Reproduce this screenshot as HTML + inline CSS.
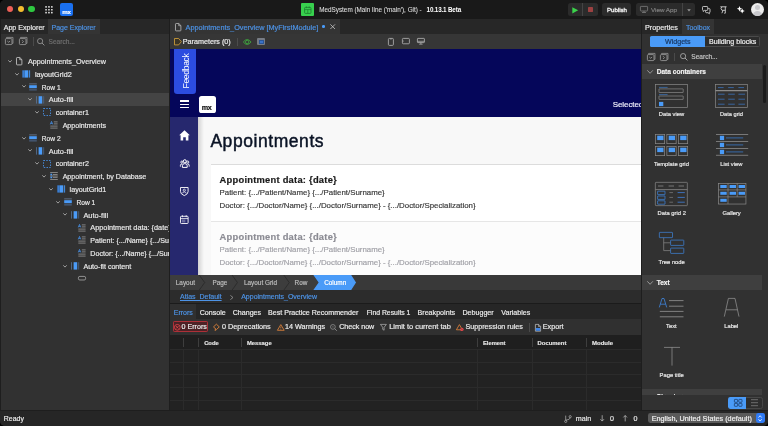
<!DOCTYPE html>
<html lang="en"><head><meta charset="utf-8"><title>MedSystem - Studio Pro</title>
<style>
html,body{margin:0;padding:0}
body{width:768px;height:426px;overflow:hidden;position:relative;background:#000;font-family:"Liberation Sans",sans-serif;font-size:7.1px;color:#e4e4e4}
div,span,svg{position:absolute;box-sizing:border-box}
#root{left:0;top:0;width:768px;height:426px;will-change:transform;overflow:hidden;border-radius:5px;background:#1e1e1e}
span{white-space:nowrap;line-height:10px;height:10px;-webkit-text-stroke:0.18px}
.b{font-weight:bold}
svg{overflow:visible}
#lp,#cp,#rp,#bp,#cv{overflow:hidden}
</style></head><body><div id="root">

<div id="tb" style="left:0;top:0;width:768px;height:19.2px;background:#191919">
<div style="left:6.8px;top:5.8999999999999995px;width:6.6px;height:6.6px;border-radius:50%;background:#ee5f57"></div>
<div style="left:17.5px;top:5.8999999999999995px;width:6.6px;height:6.6px;border-radius:50%;background:#f5bd2f"></div>
<div style="left:28.099999999999998px;top:5.8999999999999995px;width:6.6px;height:6.6px;border-radius:50%;background:#2ec840"></div>
<svg style="left:0px;top:0px;" width="60" height="19" viewBox="0 0 60 19"><rect x="45.2" y="6.0" width="1.7" height="1.7" rx="0.4" fill="#d8d8d8"/><rect x="45.2" y="8.9" width="1.7" height="1.7" rx="0.4" fill="#d8d8d8"/><rect x="45.2" y="11.8" width="1.7" height="1.7" rx="0.4" fill="#d8d8d8"/><rect x="48.1" y="6.0" width="1.7" height="1.7" rx="0.4" fill="#d8d8d8"/><rect x="48.1" y="8.9" width="1.7" height="1.7" rx="0.4" fill="#d8d8d8"/><rect x="48.1" y="11.8" width="1.7" height="1.7" rx="0.4" fill="#d8d8d8"/><rect x="51.0" y="6.0" width="1.7" height="1.7" rx="0.4" fill="#d8d8d8"/><rect x="51.0" y="8.9" width="1.7" height="1.7" rx="0.4" fill="#d8d8d8"/><rect x="51.0" y="11.8" width="1.7" height="1.7" rx="0.4" fill="#d8d8d8"/></svg>
<div style="left:60px;top:3px;width:12.6px;height:13.2px;background:#1a70f0;border-radius:2px"></div>
<span style="left:62.3px;top:7.40px;font-size:6.2px;color:#fff;font-weight:bold;letter-spacing:-0.3px">mx</span>
<div style="left:300.7px;top:3px;width:13.3px;height:13.2px;background:#38d04e;border-radius:1px"></div>
<svg style="left:303.6px;top:5.6px;" width="8" height="8" viewBox="0 0 8 8"><rect x="0.6" y="1.4" width="6.4" height="6" rx="0.8" fill="none" stroke="#1d7a2e" stroke-width="0.8"/><path d="M0.6 3.6H7M2.4 0.4V2.2M5.2 0.4V2.2M3.8 3.6V7.4" stroke="#1d7a2e" stroke-width="0.7" fill="none"/></svg>
<span style="left:319.2px;top:5.20px;font-size:6.35px;color:#dedede;-webkit-text-stroke:0.08px">MedSystem (Main line ('main'), Git) -</span>
<span style="left:426.6px;top:5.20px;font-size:6.3px;color:#fff;font-weight:bold;letter-spacing:-0.17px;-webkit-text-stroke:0">10.13.1 Beta</span>
<div style="left:567.5px;top:3.3px;width:30.3px;height:12.5px;background:#2b2b2b;border-radius:2.5px"></div>
<div style="left:582.2px;top:3.3px;width:0.6px;height:12.5px;background:#444;"></div>
<svg style="left:572px;top:6.5px;" width="6.4" height="6.6" viewBox="0 0 6.4 6.6"><path d="M0.3 0.2L6.2 3.3L0.3 6.4Z" fill="#3bd34b"/></svg>
<div style="left:587.8px;top:7px;width:5.3px;height:5.2px;background:#9c4141;border-radius:0.4px"></div>
<div style="left:602.3px;top:3.3px;width:29.2px;height:12.5px;background:#2b2b2b;border-radius:2.5px"></div>
<span style="left:607px;top:5.40px;font-size:6.1px;color:#f4f4f4;-webkit-text-stroke:0.3px">Publish</span>
<div style="left:635.6px;top:3.3px;width:59.4px;height:12.5px;background:#2b2b2b;border-radius:2.5px"></div>
<div style="left:682.3px;top:3.3px;width:0.6px;height:12.5px;background:#444;"></div>
<svg style="left:639.8px;top:6.3px;" width="8" height="7" viewBox="0 0 8 7"><rect x="0.4" y="0.4" width="7.2" height="4.6" rx="0.7" fill="none" stroke="#7d7d7d" stroke-width="0.8"/><path d="M4 5V6.4M2 6.5H6" stroke="#7d7d7d" stroke-width="0.8"/></svg>
<span style="left:651px;top:5.40px;font-size:6.25px;color:#808080;">View App</span>
<svg style="left:687px;top:8.6px;" width="4" height="3" viewBox="0 0 4 3"><path d="M0.2 0.2H3.8L2 2.4Z" fill="#9a9a9a"/></svg>
<svg style="left:702px;top:5.5px;" width="9" height="9" viewBox="0 0 9 9"><path d="M0.5 1.3Q0.5 0.5 1.3 0.5H4.9Q5.7 0.5 5.7 1.3V3.6Q5.7 4.4 4.9 4.4H2.4L1.2 5.5V4.4Q0.5 4.3 0.5 3.6Z" fill="none" stroke="#e6e6e6" stroke-width="0.8"/><path d="M6.2 2.6H7.2Q8 2.6 8 3.4V5.9Q8 6.7 7.3 6.7V7.8L6.1 6.7H4.2Q3.5 6.7 3.4 5.2" fill="none" stroke="#e6e6e6" stroke-width="0.8"/></svg>
<svg style="left:719.8px;top:6px;" width="7" height="7.4" viewBox="0 0 7 7.4"><path d="M0.3 0.8H6.6M5.3 0.8V7.2M5.3 4.3H1.9L1 2.6L1.9 0.9M1.9 7.2L3 4.5M5.3 7.2H4.2" fill="none" stroke="#e6e6e6" stroke-width="0.8"/></svg>
<svg style="left:736.6px;top:5.9px;" width="8" height="8" viewBox="0 0 8 8"><path d="M2.5 0L3.3 1.9L5.2 2.7L3.3 3.5L2.5 5.4L1.7 3.5L-0.2 2.7L1.7 1.9Z" fill="#fff"/><path d="M5.2 2.4L6 4.2L7.8 5L6 5.8L5.2 7.6L4.4 5.8L2.6 5L4.4 4.2Z" fill="#fff"/></svg>
<div style="left:751px;top:2.9px;width:13.2px;height:13.2px;border-radius:50%;background:#ececec;overflow:hidden"><div style="left:4.3px;top:2.6px;width:4.6px;height:4.6px;border-radius:50%;background:#c9c9cd"></div><div style="left:1.8px;top:8px;width:9.6px;height:9px;border-radius:50%;background:#c9c9cd"></div></div>
</div>
<div id="lp" style="left:0;top:19.2px;width:169.3px;height:391.3px;background:#313131">
<div style="left:0px;top:0px;width:169.3px;height:14.4px;background:#272727;"></div>
<div style="left:48px;top:0px;width:51.5px;height:14.4px;background:#343434;"></div>
<span style="left:3.7px;top:3.50px;font-size:7.1px;color:#ededed;">App Explorer</span>
<span style="left:51.6px;top:3.50px;font-size:6.96px;color:#4d93e6;">Page Explorer</span>
<svg style="left:4.6px;top:18.2px;" width="8.4" height="8.4" viewBox="0 0 8.4 8.4"><rect x="0.4" y="1.6" width="6.6" height="6" rx="1" fill="none" stroke="#a2a2a2" stroke-width="0.8"/><path d="M1.6 1.4V0.4H8V6.4H7.2" fill="none" stroke="#a2a2a2" stroke-width="0.7"/><path d="M2.3 4L3.7 5.3L5.1 4" fill="none" stroke="#a2a2a2" stroke-width="0.8"/></svg>
<svg style="left:19px;top:18.2px;" width="8.4" height="8.4" viewBox="0 0 8.4 8.4"><rect x="0.4" y="1.6" width="6.6" height="6" rx="1" fill="none" stroke="#a2a2a2" stroke-width="0.8"/><path d="M1.6 1.4V0.4H8V6.4H7.2" fill="none" stroke="#a2a2a2" stroke-width="0.7"/><path d="M3.1 3.2L4.4 4.6L3.1 6" fill="none" stroke="#a2a2a2" stroke-width="0.8"/></svg>
<div style="left:33px;top:18.3px;width:0.6px;height:8.3px;background:#4a4a4a;"></div>
<svg style="left:37px;top:18.4px;" width="8" height="8" viewBox="0 0 8 8"><circle cx="3.1" cy="3.1" r="2.6" fill="none" stroke="#9a9a9a" stroke-width="0.8"/><path d="M5 5L7.4 7.4" stroke="#9a9a9a" stroke-width="0.9"/></svg>
<span style="left:48.6px;top:18.00px;font-size:6.55px;color:#6f6f6f;">Search...</span>
<svg style="left:7.699999999999999px;top:40.7px;" width="4" height="2.6" viewBox="0 0 4 2.6"><path d="M0.3 0.3L2 2.1L3.7 0.3" fill="none" stroke="#b4b4b4" stroke-width="0.85"/></svg>
<svg style="left:16.0px;top:37.8px;" width="6.4" height="8.4" viewBox="0 0 6.4 8.4"><path d="M0.5 1.2Q0.5 0.5 1.2 0.5H3.8L5.9 2.6V7.2Q5.9 7.9 5.2 7.9H1.2Q0.5 7.9 0.5 7.2Z" fill="none" stroke="#cfcfcf" stroke-width="0.8"/><path d="M3.7 0.6V2.7H5.8" fill="none" stroke="#cfcfcf" stroke-width="0.7"/></svg>
<span style="left:28.0px;top:37.90px;font-size:7.2px;color:#e9e9e9;">Appointments_Overview</span>
<svg style="left:14.629999999999999px;top:53.5px;" width="4" height="2.6" viewBox="0 0 4 2.6"><path d="M0.3 0.3L2 2.1L3.7 0.3" fill="none" stroke="#b4b4b4" stroke-width="0.85"/></svg>
<svg style="left:21.93px;top:50.8px;" width="8.4" height="8" viewBox="0 0 8.4 8"><rect x="0.3" y="0.3" width="2.4" height="7.3" fill="#3a7ccf"/><rect x="2.7" y="0.3" width="3.6" height="7.3" fill="#4a9bf8"/><rect x="7.2" y="0.3" width="0.9" height="7.3" fill="#4a9bf8"/></svg>
<span style="left:34.93px;top:50.70px;font-size:7.2px;color:#e9e9e9;">layoutGrid2</span>
<svg style="left:21.56px;top:66.3px;" width="4" height="2.6" viewBox="0 0 4 2.6"><path d="M0.3 0.3L2 2.1L3.7 0.3" fill="none" stroke="#b4b4b4" stroke-width="0.85"/></svg>
<svg style="left:29.46px;top:63.599999999999994px;" width="8" height="8" viewBox="0 0 8 8"><rect x="0.2" y="0.5" width="7.6" height="0.8" fill="#6c7f99"/><rect x="0.2" y="2.2" width="7.6" height="3" fill="#4a9bf8"/><rect x="0.2" y="6.5" width="7.6" height="0.8" fill="#5577a8"/></svg>
<span style="left:41.86px;top:63.50px;font-size:6.6px;color:#e9e9e9;">Row 1</span>
<div style="left:0px;top:74.0px;width:169.3px;height:12.8px;background:#444444;"></div>
<svg style="left:28.49px;top:79.1px;" width="4" height="2.6" viewBox="0 0 4 2.6"><path d="M0.3 0.3L2 2.1L3.7 0.3" fill="none" stroke="#b4b4b4" stroke-width="0.85"/></svg>
<svg style="left:36.39px;top:76.4px;" width="8" height="8" viewBox="0 0 8 8"><rect x="0.3" y="0.2" width="0.7" height="7.4" fill="#5f7fa8"/><rect x="2.6" y="0.2" width="3.6" height="7.4" fill="#4a9bf8"/><rect x="7.4" y="0.2" width="0.7" height="7.4" fill="#4f6c92"/></svg>
<span style="left:48.79px;top:76.30px;font-size:7.4px;color:#e9e9e9;">Auto-fill</span>
<svg style="left:35.42px;top:91.9px;" width="4" height="2.6" viewBox="0 0 4 2.6"><path d="M0.3 0.3L2 2.1L3.7 0.3" fill="none" stroke="#b4b4b4" stroke-width="0.85"/></svg>
<svg style="left:43.32px;top:89.2px;" width="8" height="8" viewBox="0 0 8 8"><rect x="0.5" y="0.5" width="7" height="7" fill="none" stroke="#4a9bf8" stroke-width="0.8" stroke-dasharray="1.5 1.25"/></svg>
<span style="left:55.72px;top:89.10px;font-size:7.1px;color:#e9e9e9;">container1</span>
<svg style="left:50.25px;top:102.0px;" width="8" height="8" viewBox="0 0 8 8"><path d="M0.3 3.4L1.5 0.4L2.7 3.4M0.7 2.4H2.3" fill="none" stroke="#4a9bf8" stroke-width="0.7"/><path d="M3.8 0.9H7.6M3.8 2.9H7.6M0.3 5.1H7.6M0.3 7.1H7.6" stroke="#a8a8a8" stroke-width="0.7"/></svg>
<span style="left:62.65px;top:101.90px;font-size:7.1px;color:#e9e9e9;">Appointments</span>
<svg style="left:21.56px;top:117.5px;" width="4" height="2.6" viewBox="0 0 4 2.6"><path d="M0.3 0.3L2 2.1L3.7 0.3" fill="none" stroke="#b4b4b4" stroke-width="0.85"/></svg>
<svg style="left:29.46px;top:114.8px;" width="8" height="8" viewBox="0 0 8 8"><rect x="0.2" y="0.5" width="7.6" height="0.8" fill="#6c7f99"/><rect x="0.2" y="2.2" width="7.6" height="3" fill="#4a9bf8"/><rect x="0.2" y="6.5" width="7.6" height="0.8" fill="#5577a8"/></svg>
<span style="left:41.86px;top:114.70px;font-size:6.6px;color:#e9e9e9;">Row 2</span>
<svg style="left:28.49px;top:130.3px;" width="4" height="2.6" viewBox="0 0 4 2.6"><path d="M0.3 0.3L2 2.1L3.7 0.3" fill="none" stroke="#b4b4b4" stroke-width="0.85"/></svg>
<svg style="left:36.39px;top:127.6px;" width="8" height="8" viewBox="0 0 8 8"><rect x="0.3" y="0.2" width="0.7" height="7.4" fill="#5f7fa8"/><rect x="2.6" y="0.2" width="3.6" height="7.4" fill="#4a9bf8"/><rect x="7.4" y="0.2" width="0.7" height="7.4" fill="#4f6c92"/></svg>
<span style="left:48.79px;top:127.50px;font-size:7.4px;color:#e9e9e9;">Auto-fill</span>
<svg style="left:35.42px;top:143.1px;" width="4" height="2.6" viewBox="0 0 4 2.6"><path d="M0.3 0.3L2 2.1L3.7 0.3" fill="none" stroke="#b4b4b4" stroke-width="0.85"/></svg>
<svg style="left:43.32px;top:140.4px;" width="8" height="8" viewBox="0 0 8 8"><rect x="0.5" y="0.5" width="7" height="7" fill="none" stroke="#4a9bf8" stroke-width="0.8" stroke-dasharray="1.5 1.25"/></svg>
<span style="left:55.72px;top:140.30px;font-size:7.1px;color:#e9e9e9;">container2</span>
<svg style="left:42.349999999999994px;top:155.9px;" width="4" height="2.6" viewBox="0 0 4 2.6"><path d="M0.3 0.3L2 2.1L3.7 0.3" fill="none" stroke="#b4b4b4" stroke-width="0.85"/></svg>
<svg style="left:50.25px;top:153.2px;" width="8" height="8" viewBox="0 0 8 8"><path d="M0.2 0.5H7.8M0.2 7.5H7.8" stroke="#a8a8a8" stroke-width="0.7"/><rect x="0.4" y="1.7" width="1.8" height="1.7" fill="#4a9bf8"/><rect x="0.4" y="4.6" width="1.8" height="1.7" fill="#4a9bf8"/><path d="M3 2.5H7.6M3 5.4H7.6M0.2 4H7.8" stroke="#a8a8a8" stroke-width="0.7"/></svg>
<span style="left:62.65px;top:153.10px;font-size:7.1px;color:#e9e9e9;">Appointment, by Database</span>
<svg style="left:49.28px;top:168.7px;" width="4" height="2.6" viewBox="0 0 4 2.6"><path d="M0.3 0.3L2 2.1L3.7 0.3" fill="none" stroke="#b4b4b4" stroke-width="0.85"/></svg>
<svg style="left:56.58px;top:166.0px;" width="8.4" height="8" viewBox="0 0 8.4 8"><rect x="0.3" y="0.3" width="2.4" height="7.3" fill="#3a7ccf"/><rect x="2.7" y="0.3" width="3.6" height="7.3" fill="#4a9bf8"/><rect x="7.2" y="0.3" width="0.9" height="7.3" fill="#4a9bf8"/></svg>
<span style="left:69.58px;top:165.90px;font-size:7.2px;color:#e9e9e9;">layoutGrid1</span>
<svg style="left:56.209999999999994px;top:181.5px;" width="4" height="2.6" viewBox="0 0 4 2.6"><path d="M0.3 0.3L2 2.1L3.7 0.3" fill="none" stroke="#b4b4b4" stroke-width="0.85"/></svg>
<svg style="left:64.11px;top:178.8px;" width="8" height="8" viewBox="0 0 8 8"><rect x="0.2" y="0.5" width="7.6" height="0.8" fill="#6c7f99"/><rect x="0.2" y="2.2" width="7.6" height="3" fill="#4a9bf8"/><rect x="0.2" y="6.5" width="7.6" height="0.8" fill="#5577a8"/></svg>
<span style="left:76.50999999999999px;top:178.70px;font-size:6.6px;color:#e9e9e9;">Row 1</span>
<svg style="left:63.14px;top:194.3px;" width="4" height="2.6" viewBox="0 0 4 2.6"><path d="M0.3 0.3L2 2.1L3.7 0.3" fill="none" stroke="#b4b4b4" stroke-width="0.85"/></svg>
<svg style="left:71.03999999999999px;top:191.6px;" width="8" height="8" viewBox="0 0 8 8"><rect x="0.3" y="0.2" width="0.7" height="7.4" fill="#5f7fa8"/><rect x="2.6" y="0.2" width="3.6" height="7.4" fill="#4a9bf8"/><rect x="7.4" y="0.2" width="0.7" height="7.4" fill="#4f6c92"/></svg>
<span style="left:83.44px;top:191.50px;font-size:7.4px;color:#e9e9e9;">Auto-fill</span>
<svg style="left:77.97px;top:204.4px;" width="8" height="8" viewBox="0 0 8 8"><path d="M0.3 3.4L1.5 0.4L2.7 3.4M0.7 2.4H2.3" fill="none" stroke="#4a9bf8" stroke-width="0.7"/><path d="M3.8 0.9H7.6M3.8 2.9H7.6M0.3 5.1H7.6M0.3 7.1H7.6" stroke="#a8a8a8" stroke-width="0.7"/></svg>
<span style="left:90.37px;top:204.30px;font-size:7.3px;color:#e9e9e9;">Appointment data: {date}</span>
<svg style="left:77.97px;top:217.2px;" width="8" height="8" viewBox="0 0 8 8"><path d="M0.3 3.4L1.5 0.4L2.7 3.4M0.7 2.4H2.3" fill="none" stroke="#4a9bf8" stroke-width="0.7"/><path d="M3.8 0.9H7.6M3.8 2.9H7.6M0.3 5.1H7.6M0.3 7.1H7.6" stroke="#a8a8a8" stroke-width="0.7"/></svg>
<span style="left:90.37px;top:217.10px;font-size:7.1px;color:#e9e9e9;">Patient: {.../Name} {.../Surname}</span>
<svg style="left:77.97px;top:230.0px;" width="8" height="8" viewBox="0 0 8 8"><path d="M0.3 3.4L1.5 0.4L2.7 3.4M0.7 2.4H2.3" fill="none" stroke="#4a9bf8" stroke-width="0.7"/><path d="M3.8 0.9H7.6M3.8 2.9H7.6M0.3 5.1H7.6M0.3 7.1H7.6" stroke="#a8a8a8" stroke-width="0.7"/></svg>
<span style="left:90.37px;top:229.90px;font-size:7.1px;color:#e9e9e9;">Doctor: {.../Name} {.../Surname} - {.../Specialization}</span>
<svg style="left:63.14px;top:245.5px;" width="4" height="2.6" viewBox="0 0 4 2.6"><path d="M0.3 0.3L2 2.1L3.7 0.3" fill="none" stroke="#b4b4b4" stroke-width="0.85"/></svg>
<svg style="left:71.03999999999999px;top:242.8px;" width="8" height="8" viewBox="0 0 8 8"><rect x="0.3" y="0.2" width="0.7" height="7.4" fill="#5f7fa8"/><rect x="2.6" y="0.2" width="3.6" height="7.4" fill="#4a9bf8"/><rect x="7.4" y="0.2" width="0.7" height="7.4" fill="#4f6c92"/></svg>
<span style="left:83.44px;top:242.70px;font-size:7.1px;color:#e9e9e9;">Auto-fit content</span>
<svg style="left:77.97px;top:257.20000000000005px;" width="8" height="4.6" viewBox="0 0 8 4.6"><rect x="0.4" y="0.4" width="7.2" height="3.6" rx="1.4" fill="none" stroke="#bdbdbd" stroke-width="0.7"/></svg>
</div>
<div style="left:169.3px;top:19.2px;width:1.1px;height:391.3px;background:#1e1e1e;"></div>
<div id="cp" style="left:170.4px;top:19.2px;width:470.9px;height:29.8px;background:#272727">
<div style="left:0px;top:0px;width:169.6px;height:14.6px;background:#343434;"></div>
<div style="left:0px;top:14.6px;width:470.9px;height:15.2px;background:#363636;"></div>
<svg style="left:4.6px;top:3.4px;" width="6.4" height="8.4" viewBox="0 0 6.4 8.4"><path d="M0.5 1.2Q0.5 0.5 1.2 0.5H3.8L5.9 2.6V7.2Q5.9 7.9 5.2 7.9H1.2Q0.5 7.9 0.5 7.2Z" fill="none" stroke="#bdbdbd" stroke-width="0.8"/><path d="M3.7 0.6V2.7H5.8" fill="none" stroke="#bdbdbd" stroke-width="0.7"/></svg>
<span style="left:15.2px;top:3.50px;font-size:7.29px;color:#4d93e6;">Appointments_Overview [MyFirstModule]</span>
<div style="left:151.8px;top:6.2px;width:2.7px;height:2.7px;background:#4a9bf8;border-radius:50%"></div>
<svg style="left:159.6px;top:4.6px;" width="5.4" height="5.4" viewBox="0 0 5.4 5.4"><path d="M0.4 0.4L5 5M5 0.4L0.4 5" stroke="#c8c8c8" stroke-width="0.8"/></svg>
<svg style="left:3.2px;top:19.0px;" width="8" height="7.4" viewBox="0 0 8 7.4"><path d="M0.5 0.5H4.6L7.4 3.7L4.6 6.9H0.5Z" fill="#3a3426" stroke="#d9a63a" stroke-width="0.8" stroke-linejoin="round"/></svg>
<span style="left:12.4px;top:18.30px;font-size:7.2px;color:#ededed;">Parameters (0)</span>
<div style="left:66.2px;top:18.4px;width:0.6px;height:8.2px;background:#4c4c4c;"></div>
<svg style="left:72.2px;top:19.4px;" width="8.4" height="6" viewBox="0 0 8.4 6"><path d="M0.3 3Q4.2 -2 8.1 3Q4.2 8 0.3 3Z" fill="none" stroke="#3fae3f" stroke-width="0.8"/><circle cx="4.2" cy="3" r="1.7" fill="none" stroke="#3fae3f" stroke-width="0.8"/></svg>
<div style="left:86.8px;top:19.1px;width:8.2px;height:6.9px;background:#777c85;border-radius:1px"></div>
<div style="left:88.2px;top:20.7px;width:5.4px;height:3.8px;background:#3a72c6;border:0.6px solid #2a5596"></div>
<svg style="left:217.8px;top:18.6px;" width="6" height="8" viewBox="0 0 6 8"><rect x="0.4" y="0.4" width="5" height="7" rx="1" fill="none" stroke="#b8b8b8" stroke-width="0.8"/><path d="M2 1.1H3.8" stroke="#b8b8b8" stroke-width="0.5"/></svg>
<svg style="left:231.8px;top:19.3px;" width="8" height="6.4" viewBox="0 0 8 6.4"><rect x="0.4" y="0.4" width="7" height="5.4" rx="0.9" fill="none" stroke="#b8b8b8" stroke-width="0.8"/><path d="M1.2 2.4V3.8" stroke="#b8b8b8" stroke-width="0.5"/></svg>
<svg style="left:246.8px;top:19.1px;" width="8" height="7" viewBox="0 0 8 7"><rect x="0.4" y="0.4" width="7" height="4.2" rx="0.6" fill="none" stroke="#b8b8b8" stroke-width="0.8"/><path d="M0.6 3.3H7.2M3.9 4.6V6M2.2 6.2H5.6" stroke="#b8b8b8" stroke-width="0.7"/></svg>
</div>
<div id="cv" style="left:170.4px;top:49px;width:470.9px;height:226.2px;background:#f8f8f8">
<div style="left:0px;top:0px;width:470.9px;height:67.6px;background:#05065a;"></div>
<div style="left:0px;top:67.6px;width:27.6px;height:158.6px;background:#26286e;"></div>
<div style="left:27.6px;top:67.6px;width:6px;height:160px;background:linear-gradient(90deg,rgba(0,0,0,0.15),rgba(0,0,0,0));"></div>
<div style="left:3.8px;top:0px;width:22px;height:44.8px;background:#2c4ce0;border-radius:0 0 3.2px 3.2px"></div>
<span style="left:15.5px;top:21.6px;font-size:8.6px;letter-spacing:-0.35px;color:#fff;-webkit-text-stroke:0;transform:translate(-50%,-50%) rotate(-90deg);transform-origin:50% 50%">Feedback</span>
<div style="left:9.8px;top:51.3px;width:8.8px;height:1.4px;background:#fff;border-radius:0.3px"></div>
<div style="left:9.8px;top:54.5px;width:8.8px;height:1.4px;background:#fff;border-radius:0.3px"></div>
<div style="left:9.8px;top:57.7px;width:8.8px;height:1.4px;background:#fff;border-radius:0.3px"></div>
<div style="left:28.4px;top:47.2px;width:17px;height:16.8px;background:#fff;border-radius:2.6px"></div>
<span style="left:31.4px;top:54.00px;font-size:7.2px;color:#111;font-weight:bold;letter-spacing:-0.35px">mx</span>
<span style="left:442.4px;top:51.40px;font-size:8.0px;color:#f0f0fc;letter-spacing:-0.1px">Selected</span>
<svg style="left:8.6px;top:81px;" width="11" height="11" viewBox="0 0 11 11"><path d="M5.5 0.3L10.8 5.2H9.4V10.6H6.8V7.2H4.2V10.6H1.6V5.2H0.2Z" fill="#fff"/></svg>
<svg style="left:9.4px;top:109.6px;" width="9.6" height="9" viewBox="0 0 9.6 9"><circle cx="4.8" cy="2.2" r="1.5" fill="none" stroke="#fff" stroke-width="1"/><circle cx="1.9" cy="3.1" r="1.1" fill="none" stroke="#fff" stroke-width="0.9"/><circle cx="7.7" cy="3.1" r="1.1" fill="none" stroke="#fff" stroke-width="0.9"/><path d="M2.4 8.4V6.6Q2.4 4.6 4.8 4.6Q7.2 4.6 7.2 6.6V8.4ZM0.4 7.6V6.4Q0.4 5 2 4.9M9.2 7.6V6.4Q9.2 5 7.6 4.9" fill="none" stroke="#fff" stroke-width="1"/></svg>
<svg style="left:9.6px;top:138px;" width="8.6" height="9" viewBox="0 0 8.6 9"><path d="M0.5 0.5H8.1V4.6Q8.1 7.2 4.3 8.6Q0.5 7.2 0.5 4.6Z" fill="none" stroke="#fff" stroke-width="0.9"/><circle cx="4.3" cy="3.2" r="1.1" fill="none" stroke="#fff" stroke-width="0.7"/><path d="M2.4 6.4Q2.6 4.9 4.3 4.9Q6 4.9 6.2 6.4" fill="none" stroke="#fff" stroke-width="0.7"/></svg>
<svg style="left:9.6px;top:166px;" width="8.6" height="9" viewBox="0 0 8.6 9"><rect x="0.5" y="1.3" width="7.6" height="7.2" rx="0.8" fill="none" stroke="#fff" stroke-width="0.9"/><path d="M0.5 3.6H8.1M2.4 0.2V2.2M6.2 0.2V2.2" stroke="#fff" stroke-width="0.8"/><path d="M1.8 5.2H5.4M1.8 6.8H5.4" stroke="#c9c9e6" stroke-width="0.6"/></svg>
<span style="left:40.0px;top:80.3px;font-size:17.5px;line-height:24px;height:24px;color:#0a1325;letter-spacing:0.56px;-webkit-text-stroke:0.45px #0a1325">Appointments</span>
<div style="left:40.4px;top:115.4px;width:440px;height:56.599999999999994px;background:#fff;border-top:0.7px solid #dcdcdc"></div>
<div style="left:40.4px;top:172px;width:440px;height:60px;background:#fcfcfc;"></div>
<div style="left:40.4px;top:171.6px;width:440px;height:0.7px;background:#e6e6e6;"></div>
<span class="b" style="left:49.2px;top:125.7px;font-size:9.35px;color:#1a1a1a;letter-spacing:0.24px">Appointment data: {date}</span>
<span style="left:49.2px;top:138.8px;font-size:7.87px;color:#3a3a3a">Patient: {.../Patient/Name} {.../Patient/Surname}</span>
<span style="left:49.2px;top:152.3px;font-size:7.87px;color:#3a3a3a">Doctor: {.../Doctor/Name} {.../Doctor/Surname} - {.../Doctor/Specialization}</span>
<span class="b" style="left:49.2px;top:182.7px;font-size:9.35px;color:#8c8c94;letter-spacing:0.24px">Appointment data: {date}</span>
<span style="left:49.2px;top:195.8px;font-size:7.87px;color:#a2a2a8">Patient: {.../Patient/Name} {.../Patient/Surname}</span>
<span style="left:49.2px;top:209.3px;font-size:7.87px;color:#a2a2a8">Doctor: {.../Doctor/Name} {.../Doctor/Surname} - {.../Doctor/Specialization}</span>
</div>
<div id="bp" style="left:170.4px;top:275.2px;width:470.9px;height:135.3px;background:#222222">
<div style="left:0px;top:0px;width:470.9px;height:15.3px;background:#393939;"></div>
<svg style="left:0px;top:0px;" width="470.9" height="15.1" viewBox="0 0 470.9 15.1"><path d="M0 0H143.3L148.6 7.55L143.3 15.1H0Z" fill="#3d3d3d"/><path d="M29.2 0L34.6 7.55L29.2 15.1" fill="none" stroke="#2a2a2a" stroke-width="0.9"/><path d="M62.0 0L67.4 7.55L62.0 15.1" fill="none" stroke="#2a2a2a" stroke-width="0.9"/><path d="M113.8 0L119.2 7.55L113.8 15.1" fill="none" stroke="#2a2a2a" stroke-width="0.9"/><path d="M143.3 0H181.2L186.0 7.55L181.2 15.1H143.3L148.6 7.55Z" fill="#4a9bf8"/></svg>
<span style="left:5.4px;top:2.70px;font-size:6.4px;color:#bdbdbd;">Layout</span>
<span style="left:42.1px;top:2.70px;font-size:6.4px;color:#bdbdbd;">Page</span>
<span style="left:73.6px;top:2.70px;font-size:6.4px;color:#bdbdbd;">Layout Grid</span>
<span style="left:124.2px;top:2.70px;font-size:6.4px;color:#bdbdbd;">Row</span>
<span style="left:153.8px;top:2.70px;font-size:6.4px;color:#fff;">Column</span>
<div style="left:0px;top:15.1px;width:470.9px;height:12.9px;background:#2c2c2c;"></div>
<span style="left:9.6px;top:17.20px;font-size:7.0px;color:#4d93e6;text-decoration:underline;text-decoration-thickness:0.6px;text-underline-offset:0.5px">Atlas_Default</span>
<svg style="left:59.4px;top:19.6px;" width="3.4" height="5" viewBox="0 0 3.4 5"><path d="M0.4 0.4L3 2.5L0.4 4.6" fill="none" stroke="#a8a8a8" stroke-width="0.7"/></svg>
<span style="left:70.8px;top:17.20px;font-size:7.0px;color:#4d93e6;">Appointments_Overview</span>
<div style="left:0px;top:28.0px;width:470.9px;height:1.2px;background:#1b1b1b;"></div>
<div style="left:0px;top:29.2px;width:470.9px;height:14.2px;background:#262626;"></div>
<div style="left:0px;top:29.2px;width:25.6px;height:14.2px;background:#303030;"></div>
<span style="left:3.3px;top:32.70px;font-size:7.05px;color:#4d93e6;">Errors</span>
<span style="left:29.3px;top:32.70px;font-size:7.1px;color:#ececec;">Console</span>
<span style="left:62.4px;top:32.70px;font-size:7.05px;color:#ececec;">Changes</span>
<span style="left:97.6px;top:32.70px;font-size:7.1px;color:#ececec;">Best Practice Recommender</span>
<span style="left:196.3px;top:32.70px;font-size:6.85px;color:#ececec;">Find Results 1</span>
<span style="left:247.1px;top:32.70px;font-size:7.15px;color:#ececec;">Breakpoints</span>
<span style="left:292.1px;top:32.70px;font-size:7.1px;color:#ececec;">Debugger</span>
<span style="left:330.9px;top:32.70px;font-size:7.08px;color:#ececec;">Variables</span>
<div style="left:0px;top:43.4px;width:470.9px;height:16.300000000000004px;background:#303030;"></div>
<div style="left:2.6px;top:46.1px;width:35.2px;height:10.8px;background:#4c2226;border:0.8px solid #ad3038;border-radius:1.2px"></div>
<svg style="left:3.8px;top:49.0px;" width="6.4" height="6.4" viewBox="0 0 6.4 6.4"><circle cx="3.3" cy="3.3" r="2.85" fill="none" stroke="#e8474c" stroke-width="0.8"/><path d="M2.1 2.1L4.5 4.5M4.5 2.1L2.1 4.5" stroke="#e8474c" stroke-width="0.8"/></svg>
<span style="left:11.2px;top:47.20px;font-size:7.1px;color:#ededed;">0 Errors</span>
<svg style="left:42.6px;top:48.8px;" width="6.6" height="7.2" viewBox="0 0 6.6 7.2"><path d="M3.4 0.2L6.3 2.9L3.4 5.6L0.5 2.9Z" fill="none" stroke="#e8873a" stroke-width="0.85" stroke-linejoin="round"/><path d="M2.4 4.8L2.2 7" stroke="#e8873a" stroke-width="0.85"/></svg>
<span style="left:51.6px;top:47.20px;font-size:7.25px;color:#ededed;">0 Deprecations</span>
<svg style="left:106.2px;top:48.8px;" width="7.6" height="6.8" viewBox="0 0 7.6 6.8"><path d="M3.8 0.6L7.2 6.3H0.4Z" fill="none" stroke="#e8873a" stroke-width="0.8" stroke-linejoin="round"/><path d="M3.8 2.6V4.4M3.8 5V5.6" stroke="#e8873a" stroke-width="0.7"/></svg>
<span style="left:114.6px;top:47.20px;font-size:7.2px;color:#ededed;">14 Warnings</span>
<svg style="left:159.8px;top:48.8px;" width="7" height="7" viewBox="0 0 7 7"><circle cx="2.9" cy="2.9" r="2.4" fill="none" stroke="#9a9a9a" stroke-width="0.7"/><path d="M4.7 4.7L6.8 6.8" stroke="#9a9a9a" stroke-width="0.8"/><path d="M2 2.9H3.8" stroke="#9a9a9a" stroke-width="0.5"/></svg>
<span style="left:168.8px;top:47.20px;font-size:7.08px;color:#ededed;">Check now</span>
<svg style="left:210.0px;top:49.0px;" width="6.8" height="6.8" viewBox="0 0 6.8 6.8"><path d="M0.4 0.4H6.4L4.1 3.3V6.2L2.7 5.4V3.3Z" fill="none" stroke="#b4b4b4" stroke-width="0.7" stroke-linejoin="round"/></svg>
<span style="left:218.8px;top:47.20px;font-size:7.45px;color:#ededed;">Limit to current tab</span>
<svg style="left:285.8px;top:48.4px;" width="8" height="7.6" viewBox="0 0 8 7.6"><path d="M3.4 0.6L6.4 5.8H0.4Z" fill="none" stroke="#e8873a" stroke-width="0.8" stroke-linejoin="round"/><circle cx="5.9" cy="5.4" r="1.7" fill="#e5484d"/><path d="M4.9 4.4L6.9 6.4" stroke="#4a2224" stroke-width="0.5"/></svg>
<span style="left:295.1px;top:47.20px;font-size:7.18px;color:#ededed;">Suppression rules</span>
<div style="left:358.4px;top:48.2px;width:0.6px;height:8.6px;background:#4a4a4a;"></div>
<svg style="left:364.2px;top:48.6px;" width="6" height="7.6" viewBox="0 0 6 7.6"><path d="M0.4 0.4H3.6L5.6 2.4V7.2H0.4Z" fill="none" stroke="#c8c8c8" stroke-width="0.7"/><path d="M3.5 0.5V2.5H5.5" fill="none" stroke="#c8c8c8" stroke-width="0.6"/><rect x="0.8" y="4" width="4.4" height="2.8" fill="#3f86e8"/></svg>
<span style="left:372.4px;top:47.20px;font-size:7.2px;color:#ededed;">Export</span>
<div style="left:0px;top:59.7px;width:470.9px;height:14.399999999999991px;background:#1f1f1f;"></div>
<div style="left:12.6px;top:74.1px;width:0.6px;height:70px;background:#2b2b2b;"></div>
<div style="left:12.6px;top:62.4px;width:0.6px;height:9.2px;background:#3e3e3e;"></div>
<div style="left:27.599999999999998px;top:74.1px;width:0.6px;height:70px;background:#2b2b2b;"></div>
<div style="left:27.599999999999998px;top:62.4px;width:0.6px;height:9.2px;background:#3e3e3e;"></div>
<div style="left:70.7px;top:74.1px;width:0.6px;height:70px;background:#2b2b2b;"></div>
<div style="left:70.7px;top:62.4px;width:0.6px;height:9.2px;background:#3e3e3e;"></div>
<div style="left:306.8px;top:74.1px;width:0.6px;height:70px;background:#2b2b2b;"></div>
<div style="left:306.8px;top:62.4px;width:0.6px;height:9.2px;background:#3e3e3e;"></div>
<div style="left:361.3px;top:74.1px;width:0.6px;height:70px;background:#2b2b2b;"></div>
<div style="left:361.3px;top:62.4px;width:0.6px;height:9.2px;background:#3e3e3e;"></div>
<div style="left:416.09999999999997px;top:74.1px;width:0.6px;height:70px;background:#2b2b2b;"></div>
<div style="left:416.09999999999997px;top:62.4px;width:0.6px;height:9.2px;background:#3e3e3e;"></div>
<div style="left:0px;top:73.8px;width:470.9px;height:0.6px;background:#2b2b2b;"></div>
<div style="left:0px;top:86.55px;width:470.9px;height:0.6px;background:#2b2b2b;"></div>
<div style="left:0px;top:99.3px;width:470.9px;height:0.6px;background:#2b2b2b;"></div>
<div style="left:0px;top:112.05px;width:470.9px;height:0.6px;background:#2b2b2b;"></div>
<div style="left:0px;top:124.8px;width:470.9px;height:0.6px;background:#2b2b2b;"></div>
<span style="left:33.8px;top:62.50px;font-size:5.8px;color:#e2e2e2;font-weight:bold">Code</span>
<span style="left:76.6px;top:62.50px;font-size:5.85px;color:#e2e2e2;font-weight:bold">Message</span>
<span style="left:312.6px;top:62.50px;font-size:5.8px;color:#e2e2e2;font-weight:bold">Element</span>
<span style="left:367.2px;top:62.50px;font-size:5.9px;color:#e2e2e2;font-weight:bold">Document</span>
<span style="left:421.6px;top:62.50px;font-size:6.0px;color:#e2e2e2;font-weight:bold">Module</span>
</div>
<div id="rp" style="left:641.3px;top:19.2px;width:126.7px;height:391.3px;background:#313131">
<div style="left:0px;top:0px;width:126.7px;height:14.4px;background:#272727;"></div>
<div style="left:40.4px;top:0px;width:32px;height:14.4px;background:#343434;"></div>
<span style="left:3.7px;top:3.50px;font-size:7.24px;color:#ededed;">Properties</span>
<span style="left:44.6px;top:3.50px;font-size:7.02px;color:#4d93e6;">Toolbox</span>
<div style="left:8.7px;top:17.1px;width:109.8px;height:10.8px;background:#2c2c2c;border:0.6px solid #4a4a4a;border-radius:1.6px"></div>
<div style="left:8.7px;top:17.1px;width:55px;height:10.8px;background:#4a9bf8;border-radius:1.6px 0 0 1.6px"></div>
<span style="left:23.7px;top:18.30px;font-size:7.1px;color:#16335c;">Widgets</span>
<span style="left:67.7px;top:18.30px;font-size:7.1px;color:#f0f0f0;">Building blocks</span>
<svg style="left:5.3px;top:33.4px;" width="8.4" height="8.4" viewBox="0 0 8.4 8.4"><rect x="0.4" y="1.6" width="6.6" height="6" rx="1" fill="none" stroke="#a2a2a2" stroke-width="0.8"/><path d="M1.6 1.4V0.4H8V6.4H7.2" fill="none" stroke="#a2a2a2" stroke-width="0.7"/><path d="M2.3 4L3.7 5.3L5.1 4" fill="none" stroke="#a2a2a2" stroke-width="0.8"/></svg>
<svg style="left:18.9px;top:33.4px;" width="8.4" height="8.4" viewBox="0 0 8.4 8.4"><rect x="0.4" y="1.6" width="6.6" height="6" rx="1" fill="none" stroke="#a2a2a2" stroke-width="0.8"/><path d="M1.6 1.4V0.4H8V6.4H7.2" fill="none" stroke="#a2a2a2" stroke-width="0.7"/><path d="M3.1 3.2L4.4 4.6L3.1 6" fill="none" stroke="#a2a2a2" stroke-width="0.8"/></svg>
<div style="left:32.7px;top:33.4px;width:0.6px;height:8.3px;background:#4a4a4a;"></div>
<svg style="left:39.1px;top:33.6px;" width="8" height="8" viewBox="0 0 8 8"><circle cx="3.1" cy="3.1" r="2.6" fill="none" stroke="#b0b0b0" stroke-width="0.8"/><path d="M5 5L7.4 7.4" stroke="#b0b0b0" stroke-width="0.9"/></svg>
<span style="left:50.0px;top:33.20px;font-size:6.55px;color:#c4c4c4;">Search...</span>
<div style="left:121.7px;top:46.1px;width:3.3px;height:38px;background:#1c1c1c;border-radius:1.7px"></div>
<div style="left:0.7px;top:44.8px;width:119.8px;height:14.9px;background:#3f3f3f;"></div>
<svg style="left:5.8px;top:51.0px;" width="6.2" height="3.8" viewBox="0 0 6.2 3.8"><path d="M0.3 0.3L3.1 3.3L5.9 0.3" fill="none" stroke="#b4b4b4" stroke-width="0.75"/></svg>
<span style="left:15.4px;top:47.70px;font-size:6.57px;color:#f2f2f2;font-weight:bold">Data containers</span>
<div style="left:0.7px;top:256.1px;width:119.8px;height:14.9px;background:#3f3f3f;"></div>
<svg style="left:5.8px;top:262.3px;" width="6.2" height="3.8" viewBox="0 0 6.2 3.8"><path d="M0.3 0.3L3.1 3.3L5.9 0.3" fill="none" stroke="#b4b4b4" stroke-width="0.75"/></svg>
<span style="left:15.4px;top:259.00px;font-size:6.57px;color:#f2f2f2;font-weight:bold">Text</span>
<div style="left:0.7px;top:369.6px;width:119.8px;height:14.9px;background:#3f3f3f;"></div>
<svg style="left:5.8px;top:375.8px;" width="6.2" height="3.8" viewBox="0 0 6.2 3.8"><path d="M0.3 0.3L3.1 3.3L5.9 0.3" fill="none" stroke="#b4b4b4" stroke-width="0.75"/></svg>
<span style="left:15.4px;top:372.50px;font-size:6.57px;color:#f2f2f2;font-weight:bold">Structure</span>
<svg style="left:14.0px;top:65.0px;" width="32.7" height="24" viewBox="0 0 32.7 24"><rect x="0.35" y="0.35" width="32" height="23.3" fill="none" stroke="#8a8a8a" stroke-width="0.7"/><path d="M4 3.4H12.6M4 10.6H12.6" stroke="#3c78c4" stroke-width="0.7"/><rect x="4" y="4.9" width="24.2" height="3.6" rx="0.2" fill="none" stroke="#8a8a8a" stroke-width="0.7"/><rect x="4" y="12" width="24.2" height="3.4" rx="0.2" fill="none" stroke="#8a8a8a" stroke-width="0.7"/><rect x="4" y="17.9" width="4.3" height="4.2" fill="#4a9bf8"/></svg>
<svg style="left:74.0px;top:65.0px;" width="32.7" height="24" viewBox="0 0 32.7 24"><rect x="0.35" y="0.35" width="32" height="23.3" fill="none" stroke="#8a8a8a" stroke-width="0.7"/><path d="M0.4 6.6H32.3" stroke="#8a8a8a" stroke-width="1.1"/><path d="M3 3.6H8.6" stroke="#3a72bd" stroke-width="0.8"/><path d="M13.2 3.6H18.799999999999997" stroke="#3a72bd" stroke-width="0.8"/><path d="M23.4 3.6H29.0" stroke="#3a72bd" stroke-width="0.8"/><path d="M3 10.2H9.6" stroke="#3a72bd" stroke-width="0.8"/><path d="M13.2 10.2H19.799999999999997" stroke="#3a72bd" stroke-width="0.8"/><path d="M23.4 10.2H30.0" stroke="#3a72bd" stroke-width="0.8"/><path d="M3 15.2H9.6" stroke="#3a72bd" stroke-width="0.8"/><path d="M13.2 15.2H19.799999999999997" stroke="#3a72bd" stroke-width="0.8"/><path d="M23.4 15.2H30.0" stroke="#3a72bd" stroke-width="0.8"/><path d="M3 20.2H9.6" stroke="#3a72bd" stroke-width="0.8"/><path d="M13.2 20.2H19.799999999999997" stroke="#3a72bd" stroke-width="0.8"/><path d="M23.4 20.2H30.0" stroke="#3a72bd" stroke-width="0.8"/></svg>
<span style="left:30.2px;top:90.30px;font-size:5.8px;color:#e9e9e9;transform:translateX(-50%)">Data view</span>
<span style="left:90.2px;top:90.30px;font-size:5.7px;color:#e9e9e9;transform:translateX(-50%)">Data grid</span>
<svg style="left:14.0px;top:115.0px;" width="33" height="22" viewBox="0 0 33 22"><rect x="0.35" y="0.35" width="9.3" height="9.3" fill="none" stroke="#8a8a8a" stroke-width="0.7"/><rect x="2.2" y="1.7" width="6.3" height="4.4" fill="#4a9bf8"/><rect x="11.85" y="0.35" width="9.3" height="9.3" fill="none" stroke="#8a8a8a" stroke-width="0.7"/><rect x="13.7" y="1.7" width="6.3" height="4.4" fill="#4a9bf8"/><rect x="23.35" y="0.35" width="9.3" height="9.3" fill="none" stroke="#8a8a8a" stroke-width="0.7"/><rect x="25.2" y="1.7" width="6.3" height="4.4" fill="#4a9bf8"/><rect x="0.35" y="12.35" width="9.3" height="9.3" fill="none" stroke="#8a8a8a" stroke-width="0.7"/><rect x="2.2" y="13.7" width="6.3" height="4.4" fill="#4a9bf8"/><rect x="11.85" y="12.35" width="9.3" height="9.3" fill="none" stroke="#8a8a8a" stroke-width="0.7"/><rect x="13.7" y="13.7" width="6.3" height="4.4" fill="#4a9bf8"/><rect x="23.35" y="12.35" width="9.3" height="9.3" fill="none" stroke="#8a8a8a" stroke-width="0.7"/><rect x="25.2" y="13.7" width="6.3" height="4.4" fill="#4a9bf8"/></svg>
<svg style="left:74.5px;top:115.0px;" width="33" height="22" viewBox="0 0 33 22"><path d="M0 0.5H32.2" stroke="#8a8a8a" stroke-width="0.8"/><path d="M0 7.5H32.2" stroke="#8a8a8a" stroke-width="0.8"/><path d="M0 14.5H32.2" stroke="#8a8a8a" stroke-width="0.8"/><path d="M0 21.3H32.2" stroke="#8a8a8a" stroke-width="0.8"/><rect x="3.9" y="1.8" width="4.2" height="4.3" fill="#4a9bf8"/><path d="M10 3.9000000000000004H27.2" stroke="#37659f" stroke-width="1.1"/><rect x="3.9" y="8.8" width="4.2" height="4.3" fill="#4a9bf8"/><path d="M10 10.9H27.2" stroke="#37659f" stroke-width="1.1"/><rect x="3.9" y="15.8" width="4.2" height="4.3" fill="#4a9bf8"/><path d="M10 17.900000000000002H27.2" stroke="#37659f" stroke-width="1.1"/></svg>
<span style="left:30.2px;top:139.50px;font-size:5.8px;color:#e9e9e9;transform:translateX(-50%)">Template grid</span>
<span style="left:90.0px;top:139.50px;font-size:5.8px;color:#e9e9e9;transform:translateX(-50%)">List view</span>
<svg style="left:14.2px;top:162.8px;" width="32.7" height="24" viewBox="0 0 32.7 24"><rect x="0.35" y="0.35" width="32" height="23.3" rx="0.6" fill="none" stroke="#8a8a8a" stroke-width="0.7"/><path d="M0.4 7.6H32.3" stroke="#8a8a8a" stroke-width="0.8"/><path d="M3 4H8.4" stroke="#777" stroke-width="1"/><path d="M13.6 4H19.0" stroke="#777" stroke-width="1"/><path d="M23.6 4H29.0" stroke="#777" stroke-width="1"/><rect x="2.6" y="9.2" width="7.4" height="3.4" rx="0.15" fill="none" stroke="#3f86e0" stroke-width="0.7"/><path d="M14.4 10.6H18" stroke="#777" stroke-width="0.8"/><path d="M22.6 10.6H29.8" stroke="#3f78c8" stroke-width="0.9"/><rect x="2.6" y="14" width="7.4" height="3.4" rx="0.15" fill="none" stroke="#3f86e0" stroke-width="0.7"/><path d="M14.4 15.4H18" stroke="#777" stroke-width="0.8"/><path d="M22.6 15.4H29.8" stroke="#3f78c8" stroke-width="0.9"/><rect x="2.6" y="18.8" width="7.4" height="3.4" rx="0.15" fill="none" stroke="#3f86e0" stroke-width="0.7"/><path d="M14.4 20.2H18" stroke="#777" stroke-width="0.8"/><path d="M22.6 20.2H29.8" stroke="#3f78c8" stroke-width="0.9"/></svg>
<svg style="left:76.7px;top:164.1px;" width="28.3" height="21.4" viewBox="0 0 28.3 21.4"><rect x="0.35" y="0.35" width="27.6" height="20.7" fill="none" stroke="#8a8a8a" stroke-width="0.7"/><path d="M0.4 6.9H28M0.4 13.9H28M10 0.4V21M19.2 0.4V13.9" stroke="#8a8a8a" stroke-width="0.7"/><rect x="2.3" y="2" width="6.4" height="3" fill="#4a9bf8"/><rect x="11.6" y="2" width="6.4" height="3" fill="#4a9bf8"/><rect x="20.6" y="2" width="6.4" height="3" fill="#4a9bf8"/><rect x="2.3" y="8.8" width="6.4" height="3" fill="#4a9bf8"/><rect x="11.6" y="8.8" width="6.4" height="3" fill="#4a9bf8"/><rect x="20.6" y="8.8" width="6.4" height="3" fill="#4a9bf8"/><rect x="2.3" y="15.8" width="6.4" height="3" fill="#4a9bf8"/></svg>
<span style="left:30.4px;top:188.60px;font-size:5.8px;color:#e9e9e9;transform:translateX(-50%)">Data grid 2</span>
<span style="left:90.3px;top:188.60px;font-size:5.8px;color:#e9e9e9;transform:translateX(-50%)">Gallery</span>
<svg style="left:17.8px;top:213.2px;" width="25.2" height="21.8" viewBox="0 0 25.2 21.8"><path d="M4.7 5.8V18.6H11.4M4.7 10.8H11.4" fill="none" stroke="#8a8a8a" stroke-width="0.7"/><rect x="0.35" y="0.35" width="13.2" height="5.3" rx="0.5" fill="none" stroke="#3f86e0" stroke-width="0.7"/><rect x="11.6" y="8.1" width="13.2" height="5.3" rx="0.5" fill="none" stroke="#3f86e0" stroke-width="0.7"/><rect x="11.6" y="16.1" width="13.2" height="5.3" rx="0.5" fill="none" stroke="#3f86e0" stroke-width="0.7"/></svg>
<span style="left:30.4px;top:237.80px;font-size:5.8px;color:#e9e9e9;transform:translateX(-50%)">Tree node</span>
<svg style="left:17.9px;top:278.7px;" width="25" height="20" viewBox="0 0 25 20"><path d="M0.3 9.4L3 0.5H5L7.7 9.4M1.4 6.2H6.6" fill="none" stroke="#3f86e0" stroke-width="0.8"/><path d="M10 2.6H24.5M10 8.2H24.5M0.8 13.4H24.5M0.8 18.8H24.5" stroke="#8a8a8a" stroke-width="0.9"/></svg>
<svg style="left:82.8px;top:278.8px;" width="15.4" height="19" viewBox="0 0 15.4 19"><path d="M0.3 18.6L4.4 0.4H11L15 18.6M2.1 11.8H13.4" fill="none" stroke="#9a9a9a" stroke-width="0.7"/></svg>
<span style="left:30.1px;top:301.60px;font-size:5.8px;color:#e9e9e9;transform:translateX(-50%)">Text</span>
<span style="left:90.0px;top:301.60px;font-size:5.8px;color:#e9e9e9;transform:translateX(-50%)">Label</span>
<svg style="left:22.4px;top:328.0px;" width="16" height="19" viewBox="0 0 16 19"><path d="M0 0.4H16M8 0.4V18.6" fill="none" stroke="#9a9a9a" stroke-width="0.7"/></svg>
<span style="left:30.4px;top:350.80px;font-size:5.8px;color:#e9e9e9;transform:translateX(-50%)">Page title</span>
<div style="left:0px;top:375.6px;width:126.7px;height:20px;background:#313131;"></div>
<div style="left:87.2px;top:378.3px;width:34.7px;height:11.2px;background:#2e2e2e;border:0.6px solid #474747;border-radius:2.4px"></div>
<div style="left:87.2px;top:378.3px;width:17.8px;height:11.2px;background:#4a9bf8;border-radius:2.4px 0 0 2.4px"></div>
<svg style="left:92.3px;top:380.0px;" width="7.4" height="7.4" viewBox="0 0 7.4 7.4"><rect x="0.4" y="0.4" width="3.2" height="2.9" rx="0.5" fill="none" stroke="#16335c" stroke-width="0.7"/><rect x="0.4" y="4.4" width="3.2" height="2.9" rx="0.5" fill="none" stroke="#16335c" stroke-width="0.7"/><rect x="4.8" y="0.4" width="3.2" height="2.9" rx="0.5" fill="none" stroke="#16335c" stroke-width="0.7"/><rect x="4.8" y="4.4" width="3.2" height="2.9" rx="0.5" fill="none" stroke="#16335c" stroke-width="0.7"/></svg>
<svg style="left:109.9px;top:380.2px;" width="7.6" height="7" viewBox="0 0 7.6 7"><path d="M0 0.7H7M0 3.7H7M0 6.7H7" stroke="#6e6e6e" stroke-width="1"/></svg>
</div>
<div id="sb" style="left:0;top:410.5px;width:768px;height:15.5px;background:#262626">
<span style="left:3.8px;top:3.20px;font-size:6.95px;color:#ededed;">Ready</span>
<svg style="left:563.6px;top:4.1px;" width="8" height="8.4" viewBox="0 0 8 8.4"><circle cx="1.7" cy="6.4" r="1.1" fill="none" stroke="#b4b4b4" stroke-width="0.7"/><circle cx="1.7" cy="1.4" r="0.2" fill="#b4b4b4"/><circle cx="6.2" cy="1.7" r="1.1" fill="none" stroke="#b4b4b4" stroke-width="0.7"/><path d="M1.7 0.6V5.3M6.2 2.8Q6.2 4.6 1.9 5.2" fill="none" stroke="#b4b4b4" stroke-width="0.7"/></svg>
<span style="left:575.8px;top:3.20px;font-size:7.15px;color:#e6e6e6;">main</span>
<svg style="left:600.4px;top:4.9px;" width="4.4" height="6.6" viewBox="0 0 4.4 6.6"><path d="M2.2 0.2V6M0.4 4.2L2.2 6.1L4 4.2" fill="none" stroke="#c8c8c8" stroke-width="0.7"/></svg>
<span style="left:609.9px;top:3.20px;font-size:7.1px;color:#e6e6e6;">0</span>
<svg style="left:623.2px;top:4.9px;" width="4.4" height="6.6" viewBox="0 0 4.4 6.6"><path d="M2.2 6.4V0.6M0.4 2.4L2.2 0.5L4 2.4" fill="none" stroke="#c8c8c8" stroke-width="0.7"/></svg>
<span style="left:633.6px;top:3.20px;font-size:7.1px;color:#e6e6e6;">0</span>
<div style="left:647.5px;top:2.5px;width:117.6px;height:10.4px;background:#5a5a5a;border-radius:2.4px"></div>
<div style="left:755.8px;top:2.5px;width:9.3px;height:10.4px;background:#2f7bf6;border-radius:2.4px"></div>
<svg style="left:758.4px;top:4.4px;" width="4.2" height="6.8" viewBox="0 0 4.2 6.8"><path d="M0.5 2.5L2.1 0.7L3.7 2.5M0.5 4.3L2.1 6.1L3.7 4.3" fill="none" stroke="#fff" stroke-width="0.8"/></svg>
<span style="left:651.7px;top:3.20px;font-size:7.28px;color:#f2f2f2;">English, United States (default)</span>
</div>
<div style="left:0px;top:19.2px;width:0.8px;height:391.3px;background:#1e1e1e;"></div>
<div style="left:641.2px;top:19.2px;width:0.8px;height:391.3px;background:#1e1e1e;"></div>
</div></body></html>
